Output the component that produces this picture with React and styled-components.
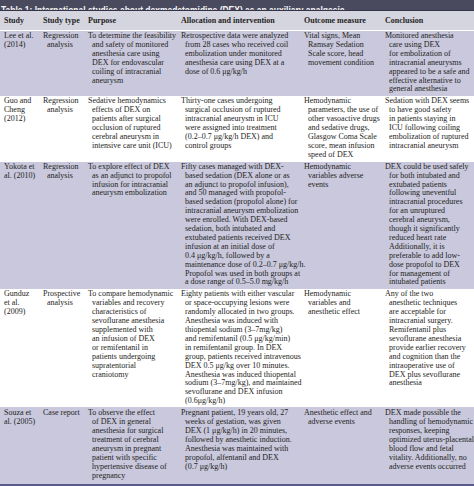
import styled, {createGlobalStyle} from 'styled-components'
import {Fragment} from 'react'

const GlobalStyle = createGlobalStyle`
  html, body {
    margin: 0;
    padding: 0;
    background: #ffffff;
  }
  body {
    width: 474px;
    height: 486px;
    overflow: hidden;
  }
`

const columns = '39px 45px 93px 123px 81px 1fr'

const Page = styled.main`
  width: 474px;
  display: flex;
  flex-direction: column;
  font-family: 'Liberation Serif', 'Times New Roman', serif;
  color: #1e1e22;
`

const TitleBar = styled.header`
  height: 10px;
  overflow: hidden;
  background: #4a4a5e;
  border-bottom: 1px solid #33334a;
  padding-left: 1px;
`

const TitleText = styled.h1`
  display: inline-block;
  margin: 0;
  font-family: 'Liberation Sans', Arial, sans-serif;
  font-weight: 700;
  font-size: 11px;
  line-height: 6px;
  color: #f4f4f4;
  white-space: nowrap;
  transform: scaleX(0.77);
  transform-origin: left center;
`

const HeaderRow = styled.div`
  display: grid;
  grid-template-columns: ${columns};
  height: 19px;
  align-items: center;
  background: #d5d5df;
  border-bottom: 1px solid #ffffff;
`

const HeadCell = styled.div`
  padding-left: 4px;
  font-weight: 700;
  font-size: 8px;
  white-space: nowrap;
`

const Row = styled.div`
  display: grid;
  grid-template-columns: ${columns};
  padding: ${(p) => p.$pad || '1px 0 2px'};
  background: ${(p) => (p.$shade ? '#c9c8dc' : '#ffffff')};
`

const Cell = styled.div`
  padding-left: ${(p) => (p.$hang ? '8px' : '4px')};
  text-indent: ${(p) => (p.$hang ? '-4px' : '0')};
  font-size: 8px;
  line-height: 8.9px;
  white-space: nowrap;
`

const BottomBar = styled.footer`
  height: 6px;
  background: #5b5a8c;
`

const heads = ['Study', 'Study type', 'Purpose', 'Allocation and intervention', 'Outcome measure', 'Conclusion']

const rows = [
  {
    shade: true,
    cells: [
      ['Lee et al.', '(2014)'],
      ['Regression', 'analysis'],
      ['To determine the feasibility', 'and safety of monitored', 'anesthesia care using', 'DEX for endovascular', 'coiling of intracranial', 'aneurysm'],
      ['Retrospective data were analyzed', 'from 28 cases who received coil', 'embolization under monitored', 'anesthesia care using DEX at a', 'dose of 0.6 μg/kg/h'],
      ['Vital signs, Mean', 'Ramsay Sedation', 'Scale score, head', 'movement condition'],
      ['Monitored anesthesia', 'care using DEX', 'for embolization of', 'intracranial aneurysms', 'appeared to be a safe and', 'effective alternative to', 'general anesthesia'],
    ],
  },
  {
    shade: false,
    cells: [
      ['Guo and', 'Cheng', '(2012)'],
      ['Regression', 'analysis'],
      ['Sedative hemodynamics', 'effects of DEX on', 'patients after surgical', 'occlusion of ruptured', 'cerebral aneurysm in', 'intensive care unit (ICU)'],
      ['Thirty-one cases undergoing', 'surgical occlusion of ruptured', 'intracranial aneurysm in ICU', 'were assigned into treatment', '(0.2–0.7 μg/kg/h DEX) and', 'control groups'],
      ['Hemodynamic', 'parameters, the use of', 'other vasoactive drugs', 'and sedative drugs,', 'Glasgow Coma Scale', 'score, mean infusion', 'speed of DEX'],
      ['Sedation with DEX seems', 'to have good safety', 'in patients staying in', 'ICU following coiling', 'embolization of ruptured', 'intracranial aneurysm'],
    ],
  },
  {
    shade: true,
    cells: [
      ['Yokota et', 'al. (2010)'],
      ['Regression', 'analysis'],
      ['To explore effect of DEX', 'as an adjunct to propofol', 'infusion for intracranial', 'aneurysm embolization'],
      [
        'Fifty cases managed with DEX-',
        'based sedation (DEX alone or as',
        'an adjunct to propofol infusion),',
        'and 50 managed with propofol-',
        'based sedation (propofol alone) for',
        'intracranial aneurysm embolization',
        'were enrolled. With DEX-based',
        'sedation, both intubated and',
        'extubated patients received DEX',
        'infusion at an initial dose of',
        '0.4 μg/kg/h, followed by a',
        'maintenance dose of 0.2–0.7 μg/kg/h.',
        'Propofol was used in both groups at',
        'a dose range of 0.5–5.0 mg/kg/h',
      ],
      ['Hemodynamic', 'variables adverse', 'events'],
      [
        'DEX could be used safely',
        'for both intubated and',
        'extubated patients',
        'following uneventful',
        'intracranial procedures',
        'for an unruptured',
        'cerebral aneurysm,',
        'though it significantly',
        'reduced heart rate',
        'Additionally, it is',
        'preferable to add low-',
        'dose propofol to DEX',
        'for management of',
        'intubated patients',
      ],
    ],
  },
  {
    shade: false,
    pad: '1px 0 1px',
    cells: [
      ['Gunduz', 'et al.', '(2009)'],
      ['Prospective', 'analysis'],
      ['To compare hemodynamic', 'variables and recovery', 'characteristics of', 'sevoflurane anesthesia', 'supplemented with', 'an infusion of DEX', 'or remifentanil in', 'patients undergoing', 'supratentorial', 'craniotomy'],
      [
        'Eighty patients with either vascular',
        'or space-occupying lesions were',
        'randomly allocated in two groups.',
        'Anesthesia was induced with',
        'thiopental sodium (3–7mg/kg)',
        'and remifentanil (0.5 μg/kg/min)',
        'in remifentanil group. In DEX',
        'group, patients received intravenous',
        'DEX 0.5 μg/kg over 10 minutes.',
        'Anesthesia was induced thiopental',
        'sodium (3–7mg/kg), and maintained',
        'sevoflurane and DEX infusion',
        '(0.6μg/kg/h)',
      ],
      ['Hemodynamic', 'variables and', 'anesthetic effect'],
      ['Any of the two', 'anesthetic techniques', 'are acceptable for', 'intracranial surgery.', 'Remifentanil plus', 'sevoflurane anesthesia', 'provide earlier recovery', 'and cognition than the', 'intraoperative use of', 'DEX plus sevoflurane', 'anesthesia'],
    ],
  },
  {
    shade: true,
    pad: '2px 0 4px',
    cells: [
      ['Souza et', 'al. (2005)'],
      ['Case report'],
      ['To observe the effect', 'of DEX in general', 'anesthesia for surgical', 'treatment of cerebral', 'aneurysm in pregnant', 'patient with specific', 'hypertensive disease of', 'pregnancy'],
      ['Pregnant patient, 19 years old, 27', 'weeks of gestation, was given', 'DEX (1 μg/kg/h) in 20 minutes,', 'followed by anesthetic induction.', 'Anesthesia was maintained with', 'propofol, alfentanil and DEX', '(0.7 μg/kg/h)'],
      ['Anesthetic effect and', 'adverse events'],
      ['DEX made possible the', 'handling of hemodynamic', 'responses, keeping', 'optimized uterus-placental', 'blood flow and fetal', 'vitality. Additionally, no', 'adverse events occurred'],
    ],
  },
]

const Lines = ({lines}) =>
  lines.map((line, i) => (
    <Fragment key={i}>
      {i > 0 && <br />}
      {line}
    </Fragment>
  ))

const App = () => {
  return (
    <>
      <GlobalStyle />
      <Page>
        <TitleBar>
          <TitleText>Table 1: International studies about dexmedetomidine (DEX) as an auxiliary analgesic</TitleText>
        </TitleBar>
        <HeaderRow>
          {heads.map((h) => (
            <HeadCell key={h}>{h}</HeadCell>
          ))}
        </HeaderRow>
        {rows.map((row, r) => (
          <Row key={r} $shade={row.shade} $pad={row.pad}>
            {row.cells.map((lines, c) => (
              <Cell key={c} $hang={c > 0}>
                <Lines lines={lines} />
              </Cell>
            ))}
          </Row>
        ))}
        <BottomBar />
      </Page>
    </>
  )
}

export default App
